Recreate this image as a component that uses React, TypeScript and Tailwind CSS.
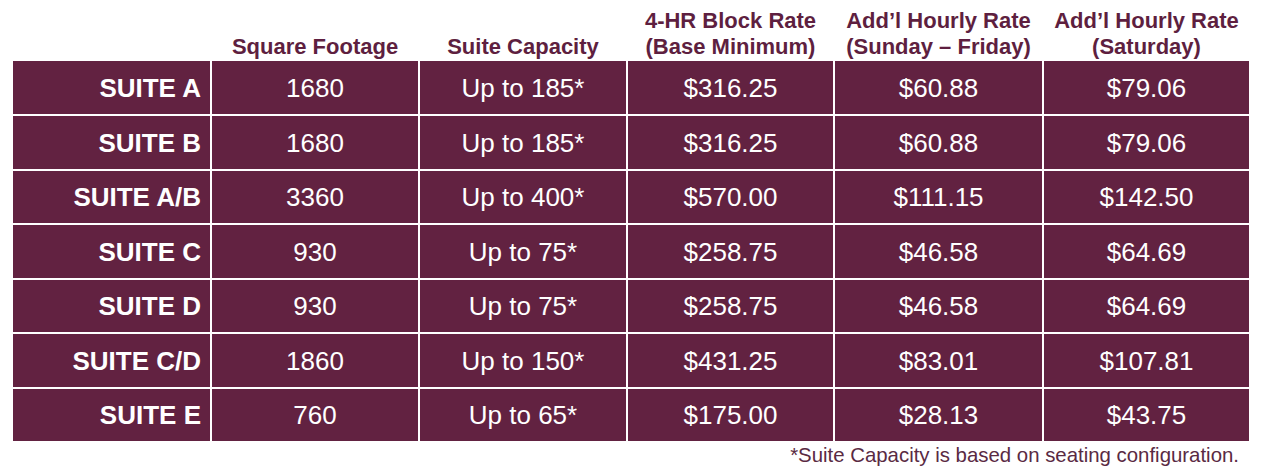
import React from "react";

const cols = "grid-cols-[197px_206px_206px_205px_207px_205px]";

const rows: string[][] = [
  ["SUITE A", "1680", "Up to 185*", "$316.25", "$60.88", "$79.06"],
  ["SUITE B", "1680", "Up to 185*", "$316.25", "$60.88", "$79.06"],
  ["SUITE A/B", "3360", "Up to 400*", "$570.00", "$111.15", "$142.50"],
  ["SUITE C", "930", "Up to 75*", "$258.75", "$46.58", "$64.69"],
  ["SUITE D", "930", "Up to 75*", "$258.75", "$46.58", "$64.69"],
  ["SUITE C/D", "1860", "Up to 150*", "$431.25", "$83.01", "$107.81"],
  ["SUITE E", "760", "Up to 65*", "$175.00", "$28.13", "$43.75"],
];

const heights = ["h-[53px]", "h-[53px]", "h-[52px]", "h-[53px]", "h-[52px]", "h-[53px]", "h-[52px]"];

export default function App() {
  return (
    <div
      className="w-[1263px] h-[476px] bg-white pl-[13px]"
      style={{ fontFamily: '"Liberation Sans", Arial, sans-serif' }}
    >
      <div className={`grid ${cols} gap-x-[2px] w-[1236px] h-[61px] items-end pb-px text-[22px] leading-[26px] font-bold text-[#5e1f40] text-center`}>
        <div></div>
        <div>Square Footage</div>
        <div>Suite Capacity</div>
        <div>4-HR Block Rate<br />(Base Minimum)</div>
        <div>Add’l Hourly Rate<br />(Sunday – Friday)</div>
        <div>Add’l Hourly Rate<br />(Saturday)</div>
      </div>
      <div className={`grid ${cols} gap-[2px] w-[1236px] bg-white`}>
        {rows.map((r, i) =>
          r.map((c, j) => (
            <div
              key={`${i}-${j}`}
              className={`${heights[i]} bg-[#622241] text-white text-[26px] leading-none flex items-center ${
                j === 0 ? "justify-end pr-[9px] font-bold" : "justify-center"
              }`}
            >
              {c}
            </div>
          ))
        )}
      </div>
      <div className="w-[1236px] text-right pr-[10px] pt-[3px] text-[20.4px] leading-[23px] text-[#5a2a43]">
        *Suite Capacity is based on seating configuration.
      </div>
    </div>
  );
}
